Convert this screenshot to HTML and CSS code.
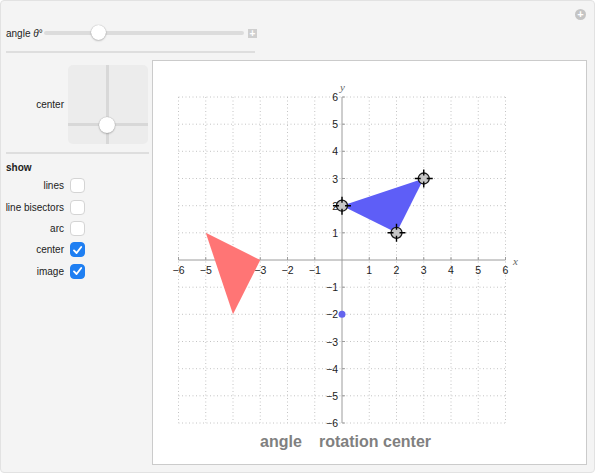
FILE: index.html
```html
<!DOCTYPE html>
<html>
<head>
<meta charset="utf-8">
<link rel="stylesheet" href="styles.css">
</head>
<body>
<div class="app">
  <div class="top">
    <div class="angle-row">
      <span class="ctl-label">angle <i>θ</i>°</span>
      <div class="slider"><div class="track"></div><div class="thumb"></div></div>
      <span class="plus-sq">+</span>
    </div>
    <div class="divider wide"></div>
  </div>
  <div class="main">
    <div class="side">
      <div class="center-row">
        <span class="side-label">center</span>
        <div class="pad2d">
          <div class="vline"></div>
          <div class="hline"></div>
          <div class="thumb2d"></div>
        </div>
      </div>
      <div class="divider narrow"></div>
      <div class="show-title">show</div>
      <div class="cb-row"><span class="side-label">lines</span><span class="cb"></span></div>
      <div class="cb-row"><span class="side-label">line bisectors</span><span class="cb"></span></div>
      <div class="cb-row"><span class="side-label">arc</span><span class="cb"></span></div>
      <div class="cb-row"><span class="side-label">center</span><span class="cb on"><svg viewBox="0 0 14 14" width="14" height="14"><path d="M3.2 7.4 L6 10.2 L11 3.8" fill="none" stroke="#fff" stroke-width="2" stroke-linecap="round" stroke-linejoin="round"/></svg></span></div>
      <div class="cb-row"><span class="side-label">image</span><span class="cb on"><svg viewBox="0 0 14 14" width="14" height="14"><path d="M3.2 7.4 L6 10.2 L11 3.8" fill="none" stroke="#fff" stroke-width="2" stroke-linecap="round" stroke-linejoin="round"/></svg></span></div>
    </div>
    <div class="plot">
      <svg class="graph" width="433" height="403" viewBox="0 0 433 403">
        <g class="grid">
          <line x1="25.5" y1="36" x2="25.5" y2="362"/>
          <line x1="52.75" y1="36" x2="52.75" y2="362"/>
          <line x1="80" y1="36" x2="80" y2="362"/>
          <line x1="107.25" y1="36" x2="107.25" y2="362"/>
          <line x1="134.5" y1="36" x2="134.5" y2="362"/>
          <line x1="161.75" y1="36" x2="161.75" y2="362"/>
          <line x1="216.25" y1="36" x2="216.25" y2="362"/>
          <line x1="243.5" y1="36" x2="243.5" y2="362"/>
          <line x1="270.75" y1="36" x2="270.75" y2="362"/>
          <line x1="298" y1="36" x2="298" y2="362"/>
          <line x1="325.25" y1="36" x2="325.25" y2="362"/>
          <line x1="352.5" y1="36" x2="352.5" y2="362"/>
          <line x1="25.5" y1="36" x2="352.5" y2="36"/>
          <line x1="25.5" y1="63.2" x2="352.5" y2="63.2"/>
          <line x1="25.5" y1="90.3" x2="352.5" y2="90.3"/>
          <line x1="25.5" y1="117.5" x2="352.5" y2="117.5"/>
          <line x1="25.5" y1="144.7" x2="352.5" y2="144.7"/>
          <line x1="25.5" y1="171.8" x2="352.5" y2="171.8"/>
          <line x1="25.5" y1="226.2" x2="352.5" y2="226.2"/>
          <line x1="25.5" y1="253.3" x2="352.5" y2="253.3"/>
          <line x1="25.5" y1="280.5" x2="352.5" y2="280.5"/>
          <line x1="25.5" y1="307.7" x2="352.5" y2="307.7"/>
          <line x1="25.5" y1="334.8" x2="352.5" y2="334.8"/>
          <line x1="25.5" y1="362" x2="352.5" y2="362"/>
        </g>
        <g class="axes">
          <line x1="25.5" y1="199" x2="352.5" y2="199"/>
          <line x1="189" y1="36" x2="189" y2="362"/>
          <path d="M25.5 199v-3M52.75 199v-3M80 199v-3M107.25 199v-3M134.5 199v-3M161.75 199v-3M216.25 199v-3M243.5 199v-3M270.75 199v-3M298 199v-3M325.25 199v-3M352.5 199v-3"/>
          <path d="M189 36h3M189 63.2h3M189 90.3h3M189 117.5h3M189 144.7h3M189 171.8h3M189 226.2h3M189 253.3h3M189 280.5h3M189 307.7h3M189 334.8h3M189 362h3"/>
        </g>
        <g class="xt">
          <text x="25.5" y="213">−6</text>
          <text x="52.75" y="213">−5</text>
          <text x="80" y="213">−4</text>
          <text x="107.25" y="213">−3</text>
          <text x="134.5" y="213">−2</text>
          <text x="161.75" y="213">−1</text>
          <text x="216.25" y="213">1</text>
          <text x="243.5" y="213">2</text>
          <text x="270.75" y="213">3</text>
          <text x="298" y="213">4</text>
          <text x="325.25" y="213">5</text>
          <text x="352.5" y="213">6</text>
        </g>
        <g class="yt">
          <text x="185" y="40">6</text>
          <text x="185" y="67.2">5</text>
          <text x="185" y="94.3">4</text>
          <text x="185" y="121.5">3</text>
          <text x="185" y="148.7">2</text>
          <text x="185" y="175.8">1</text>
          <text x="185" y="230.2">−1</text>
          <text x="185" y="257.3">−2</text>
          <text x="185" y="284.5">−3</text>
          <text x="185" y="311.7">−4</text>
          <text x="185" y="338.8">−5</text>
          <text x="185" y="366">−6</text>
        </g>
        <text class="axlabel" x="360" y="204">x</text>
        <text class="axlabel" x="187" y="30">y</text>
        <polygon class="red" points="52.75,171.8 107.25,199 80,253.3"/>
        <polygon class="blue" points="189,144.7 243.5,171.8 270.75,117.5"/>
        <circle class="dot" cx="189" cy="253.3" r="3.5"/>
        <g class="loc" transform="translate(189 144.7)">
          <circle r="5.5"/><path d="M-9 0h6M3 0h6M0 -9v6M0 3v6"/>
        </g>
        <g class="loc" transform="translate(243.5 171.8)">
          <circle r="5.5"/><path d="M-9 0h6M3 0h6M0 -9v6M0 3v6"/>
        </g>
        <g class="loc" transform="translate(270.75 117.5)">
          <circle r="5.5"/><path d="M-9 0h6M3 0h6M0 -9v6M0 3v6"/>
        </g>
        <text class="cap" x="107" y="386">angle</text>
        <text class="cap" x="166" y="386">rotation center</text>
      </svg>
    </div>
  </div>
  <span class="corner-plus">+</span>
</div>
</body>
</html>
```
FILE: styles.css
```css
html, body {
  margin: 0;
  padding: 0;
  background: #ffffff;
}
body {
  font-family: "Liberation Sans", Arial, sans-serif;
  font-size: 10px;
  color: #222;
}
.app {
  position: relative;
  box-sizing: border-box;
  width: 595px;
  height: 473px;
  background: #f4f4f4;
  border: 1px solid #e2e2e2;
  border-radius: 4px;
}
.top {
  padding: 22px 0 0 5px;
}
.angle-row {
  display: flex;
  align-items: center;
  height: 20px;
}
.ctl-label {
  font-size: 10px;
  color: #222;
  width: 38px;
}
.slider {
  position: relative;
  width: 200px;
  height: 20px;
  display: flex;
  align-items: center;
}
.track {
  width: 100%;
  height: 4px;
  border-radius: 2px;
  background: #dcdcdc;
}
.thumb {
  position: absolute;
  left: 47px;
  top: 2px;
  width: 15px;
  height: 15px;
  border-radius: 50%;
  background: #fff;
  box-shadow: 0 0 1px rgba(0,0,0,0.35), 0 1px 2px rgba(0,0,0,0.2);
}
.plus-sq {
  margin-left: 4px;
  width: 9px;
  height: 9px;
  background: #cfcfcf;
  color: #fff;
  font-size: 10px;
  font-weight: bold;
  line-height: 9px;
  text-align: center;
}
.divider {
  height: 2px;
  background: #dedede;
}
.divider.wide {
  width: 249px;
  margin-top: 8px;
}
.main {
  display: flex;
  margin-top: 7px;
}
.side {
  width: 151px;
  padding-top: 5px;
}
.center-row {
  display: flex;
  align-items: center;
}
.side-label {
  width: 63px;
  text-align: right;
  font-size: 10px;
  color: #222;
}
.pad2d {
  position: relative;
  margin-left: 4px;
  width: 80px;
  height: 79px;
  border-radius: 5px;
  background: #ececec;
}
.vline {
  position: absolute;
  left: 38px;
  top: 0;
  width: 3px;
  height: 100%;
  background: #d8d8d8;
}
.hline {
  position: absolute;
  left: 0;
  top: 58px;
  width: 100%;
  height: 3px;
  background: #d8d8d8;
}
.thumb2d {
  position: absolute;
  left: 31px;
  top: 52px;
  width: 16px;
  height: 16px;
  border-radius: 50%;
  background: #fff;
  box-shadow: 0 0 1px rgba(0,0,0,0.35), 0 1px 2px rgba(0,0,0,0.2);
}
.divider.narrow {
  width: 143px;
  margin: 8px 0 0 5px;
}
.show-title {
  font-weight: bold;
  font-size: 10px;
  margin: 7px 0 0 5px;
  height: 14px;
  line-height: 14px;
}
.cb-row {
  display: flex;
  align-items: center;
  height: 21.4px;
}
.cb {
  display: flex;
  align-items: center;
  justify-content: center;
  box-sizing: border-box;
  margin-left: 6px;
  width: 15px;
  height: 15px;
  border-radius: 4px;
  background: #fff;
  border: 1px solid #d4d4d4;
}
.cb.on {
  background: #1f7ff2;
  border-color: #1f7ff2;
}
.plot {
  width: 433px;
  height: 403px;
  background: #fff;
  border: 1px solid #cbcbcb;
}
.graph {
  display: block;
}
.grid line {
  stroke: #c4c4c4;
  stroke-width: 1;
  stroke-dasharray: 1 2.5;
}
.axes line, .axes path {
  stroke: #9c9c9c;
  stroke-width: 1;
  fill: none;
}
.xt text {
  font-family: "Liberation Sans", Arial, sans-serif;
  font-size: 10.5px;
  fill: #222;
  text-anchor: middle;
}
.yt text {
  font-family: "Liberation Sans", Arial, sans-serif;
  font-size: 10.5px;
  fill: #222;
  text-anchor: end;
}
.axlabel {
  font-family: "Liberation Serif", serif;
  font-style: italic;
  font-size: 11px;
  fill: #666;
}
.red {
  fill: #ff7575;
}
.blue {
  fill: #5e5ef7;
}
.dot {
  fill: #6464ee;
}
.loc circle {
  fill: #c6c6c6;
  stroke: #1a1a1a;
  stroke-width: 1.3;
}
.loc path {
  stroke: #000;
  stroke-width: 1.4;
  fill: none;
}
.cap {
  font-family: "Liberation Sans", Arial, sans-serif;
  font-weight: bold;
  font-size: 16px;
  fill: #808080;
}
.corner-plus {
  position: absolute;
  right: 8px;
  top: 8px;
  width: 11px;
  height: 11px;
  border-radius: 50%;
  background: #c4c4c4;
  color: #fff;
  font-size: 11px;
  font-weight: bold;
  line-height: 11px;
  text-align: center;
}
```
